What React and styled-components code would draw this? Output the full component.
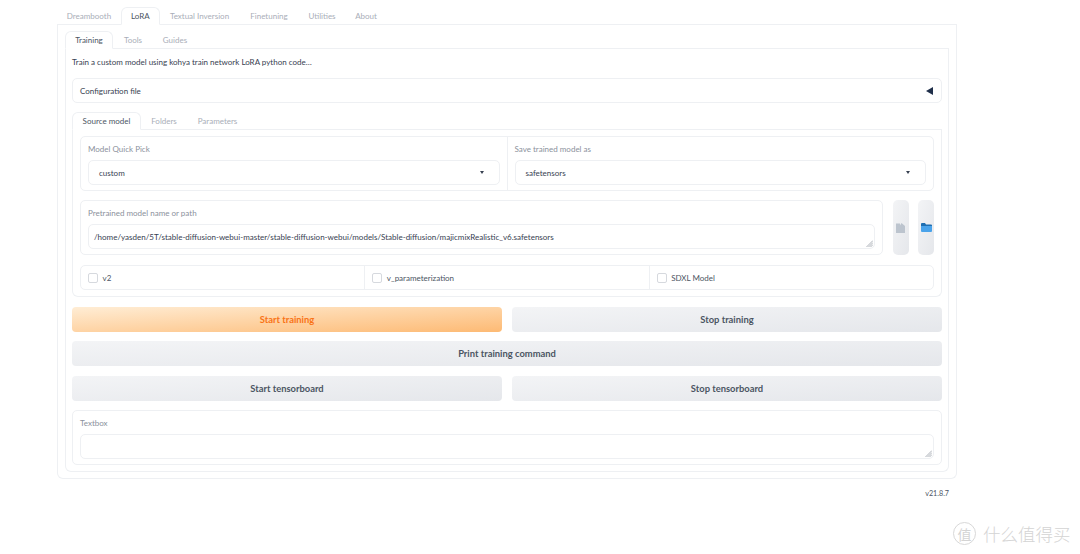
import React from 'react';
import styled, { createGlobalStyle } from 'styled-components';

const GlobalStyle = createGlobalStyle`
  html, body {
    margin: 0;
    padding: 0;
    background: #fff;
  }
  body {
    font-family: Lato, "Noto Sans", sans-serif;
    font-size: 8px;
    color: #374151;
  }
`;

const Page = styled.div`
  position: relative;
  width: 1080px;
  height: 554px;
  box-sizing: border-box;
  padding: 7px 123px 0 57px;
  overflow: hidden;
`;

const TabBar = styled.div`
  display: flex;
  height: ${p => p.$height}px;
  border-bottom: 1px solid #eef0f3;
  box-sizing: border-box;
`;

const Tab = styled.div`
  display: flex;
  align-items: center;
  justify-content: center;
  width: ${p => p.$width}px;
  box-sizing: border-box;
  padding-top: 0.5px;
  color: ${p => (p.$active ? '#4b5563' : '#a9aeb8')};
  background: #fff;
  border: 1px solid ${p => (p.$active ? '#eef0f3' : 'transparent')};
  border-bottom: ${p => (p.$active ? '1px solid #fff' : 'none')};
  border-radius: 6px 6px 0 0;
  margin-bottom: ${p => (p.$active ? '-1px' : '0')};
  white-space: nowrap;
`;

const Panel = styled.div`
  border: 1px solid #eef0f3;
  border-top: none;
  border-radius: 0 0 6px 6px;
  padding: ${p => p.$padding};
  margin-bottom: ${p => p.$gap || 0}px;
`;

const Intro = styled.div`
  height: 29px;
  line-height: 26px;
  color: #374151;
`;

const Accordion = styled.div`
  display: flex;
  align-items: center;
  justify-content: space-between;
  height: 25px;
  box-sizing: border-box;
  padding: 0 8px 0 7px;
  border: 1px solid #eef0f3;
  border-radius: 5px;
  margin-bottom: 9px;
`;

const Caret = styled.span`
  width: 0;
  height: 0;
  border-style: solid;
  border-width: 4px 7px 4px 0;
  border-color: transparent #1f2f4a transparent transparent;
`;

const Row = styled.div`
  display: flex;
  flex: ${p => (p.$grow ? 1 : 'initial')};
  border: 1px solid #eef0f3;
  border-radius: 5px;
`;

const Cell = styled.div`
  flex: 1 1 0;
  padding: 6px 7px 5px;
  min-width: 0;
  & + & {
    border-left: 1px solid #eef0f3;
  }
`;

const Label = styled.div`
  height: 17px;
  line-height: 12px;
  color: #8b919c;
`;

const Field = styled.div`
  position: relative;
  display: flex;
  align-items: center;
  justify-content: space-between;
  height: 25px;
  box-sizing: border-box;
  padding: 0 10px 0 ${p => p.$padL || 10}px;
  border: 1px solid #eef0f3;
  border-radius: 5px;
  color: #374151;
  white-space: nowrap;
`;

const SelectArrow = styled.span`
  width: 0;
  height: 0;
  margin-right: 5px;
  border-style: solid;
  border-width: 3px 2.5px 0 2.5px;
  border-color: #374151 transparent transparent transparent;
`;

const ResizeGrip = styled.svg`
  position: absolute;
  right: 1px;
  bottom: 1px;
  width: 7px;
  height: 7px;
`;

const PathRow = styled.div`
  display: flex;
  margin: 9px 0 10px;
`;

const IconButton = styled.div`
  display: flex;
  align-items: center;
  justify-content: center;
  width: 16px;
  margin-left: ${p => p.$gap}px;
  border-radius: 5px;
  background: linear-gradient(to bottom right, #f3f4f6, #e5e7eb);
`;

const CheckCell = styled.div`
  flex: 1 1 0;
  display: flex;
  align-items: center;
  height: 23px;
  padding-left: 7px;
  color: #4b5563;
  & + & {
    border-left: 1px solid #eef0f3;
  }
`;

const CheckBox = styled.span`
  width: 8px;
  height: 8px;
  margin-right: 4.5px;
  border: 1px solid #d6d9de;
  border-radius: 2px;
`;

const ButtonRow = styled.div`
  display: flex;
  gap: 10px;
  margin-bottom: 9.5px;
`;

const Button = styled.div`
  flex: 1 1 0;
  display: flex;
  align-items: center;
  justify-content: center;
  height: 25px;
  border-radius: 4px;
  font-size: 9.4px;
  font-weight: 700;
  color: ${p => (p.$primary ? '#f97316' : '#4b5563')};
  background: ${p =>
    p.$primary
      ? 'linear-gradient(to bottom right, #ffedd5, #fdba74)'
      : 'linear-gradient(to bottom right, #f3f4f6, #e5e7eb)'};
`;

const Version = styled.div`
  text-align: right;
  padding: 10px 8px 0 0;
  font-size: 7.2px;
  color: #4b5563;
`;

const Watermark = styled.div`
  position: absolute;
  left: 953px;
  top: 521px;
  display: flex;
  align-items: center;
  color: #d4d4d4;
  font-family: "Noto Sans CJK SC", sans-serif;
  white-space: nowrap;
`;

const WatermarkBadge = styled.span`
  display: flex;
  align-items: center;
  justify-content: center;
  width: 21px;
  height: 21px;
  border: 1px solid #d8d8d8;
  border-radius: 50%;
  font-size: 14px;
  margin-right: 7px;
`;

const WatermarkText = styled.span`
  font-size: 17.5px;
  font-weight: 300;
`;

const Grip = () => (
  <ResizeGrip viewBox="0 0 7 7">
    <path d="M7 0.5 L0.5 7 M7 2.5 L2.5 7 M7 4.5 L4.5 7" stroke="#aeb3ba" strokeWidth="1" />
  </ResizeGrip>
);

const FileIcon = () => (
  <svg width="9" height="11" viewBox="0 0 9 11">
    <path d="M0 1.5h4v2L5.5 1 9 4v7H0z" fill="#bcc4ce" />
  </svg>
);

const FolderIcon = () => (
  <svg width="11" height="9" viewBox="0 0 11 9">
    <path d="M0 1a1 1 0 0 1 1-1h3l1 1.5h5a1 1 0 0 1 1 1V3H0z" fill="#1f6fb2" />
    <path d="M0 3h11v5a1 1 0 0 1-1 1H1a1 1 0 0 1-1-1z" fill="#4aa3ea" />
  </svg>
);

const App = () => {
  return (
    <Page>
      <GlobalStyle />
      <TabBar $height={18}>
        <Tab $width={64}>Dreambooth</Tab>
        <Tab $width={38.5} $active>LoRA</Tab>
        <Tab $width={80}>Textual Inversion</Tab>
        <Tab $width={59}>Finetuning</Tab>
        <Tab $width={47}>Utilities</Tab>
        <Tab $width={41}>About</Tab>
      </TabBar>
      <Panel $padding="6px 7px 6px">
        <TabBar $height={18}>
          <Tab $width={48} $active>Training</Tab>
          <Tab $width={40}>Tools</Tab>
          <Tab $width={44}>Guides</Tab>
        </TabBar>
        <Panel $padding="0 6px 6px">
          <Intro>Train a custom model using kohya train network LoRA python code…</Intro>
          <Accordion>
            Configuration file
            <Caret />
          </Accordion>
          <TabBar $height={18}>
            <Tab $width={69} $active>Source model</Tab>
            <Tab $width={46}>Folders</Tab>
            <Tab $width={61}>Parameters</Tab>
          </TabBar>
          <Panel $padding="6px 7px 6px" $gap={9.5}>
            <Row>
              <Cell>
                <Label>Model Quick Pick</Label>
                <Field>
                  custom
                  <SelectArrow />
                </Field>
              </Cell>
              <Cell>
                <Label>Save trained model as</Label>
                <Field>
                  safetensors
                  <SelectArrow />
                </Field>
              </Cell>
            </Row>
            <PathRow>
              <Row $grow>
                <Cell>
                  <Label>Pretrained model name or path</Label>
                  <Field $padL={5}>
                    /home/yasden/5T/stable-diffusion-webui-master/stable-diffusion-webui/models/Stable-diffusion/majicmixRealistic_v6.safetensors
                    <Grip />
                  </Field>
                </Cell>
              </Row>
              <IconButton $gap={10}><FileIcon /></IconButton>
              <IconButton $gap={9.5}><FolderIcon /></IconButton>
            </PathRow>
            <Row>
              <CheckCell><CheckBox />v2</CheckCell>
              <CheckCell><CheckBox />v_parameterization</CheckCell>
              <CheckCell><CheckBox />SDXL Model</CheckCell>
            </Row>
          </Panel>
          <ButtonRow>
            <Button $primary>Start training</Button>
            <Button>Stop training</Button>
          </ButtonRow>
          <ButtonRow>
            <Button>Print training command</Button>
          </ButtonRow>
          <ButtonRow>
            <Button>Start tensorboard</Button>
            <Button>Stop tensorboard</Button>
          </ButtonRow>
          <Row>
            <Cell>
              <Label>Textbox</Label>
              <Field><Grip /></Field>
            </Cell>
          </Row>
        </Panel>
      </Panel>
      <Version>v21.8.7</Version>
      <Watermark>
        <WatermarkBadge>值</WatermarkBadge>
        <WatermarkText>什么值得买</WatermarkText>
      </Watermark>
    </Page>
  );
};

export default App;
